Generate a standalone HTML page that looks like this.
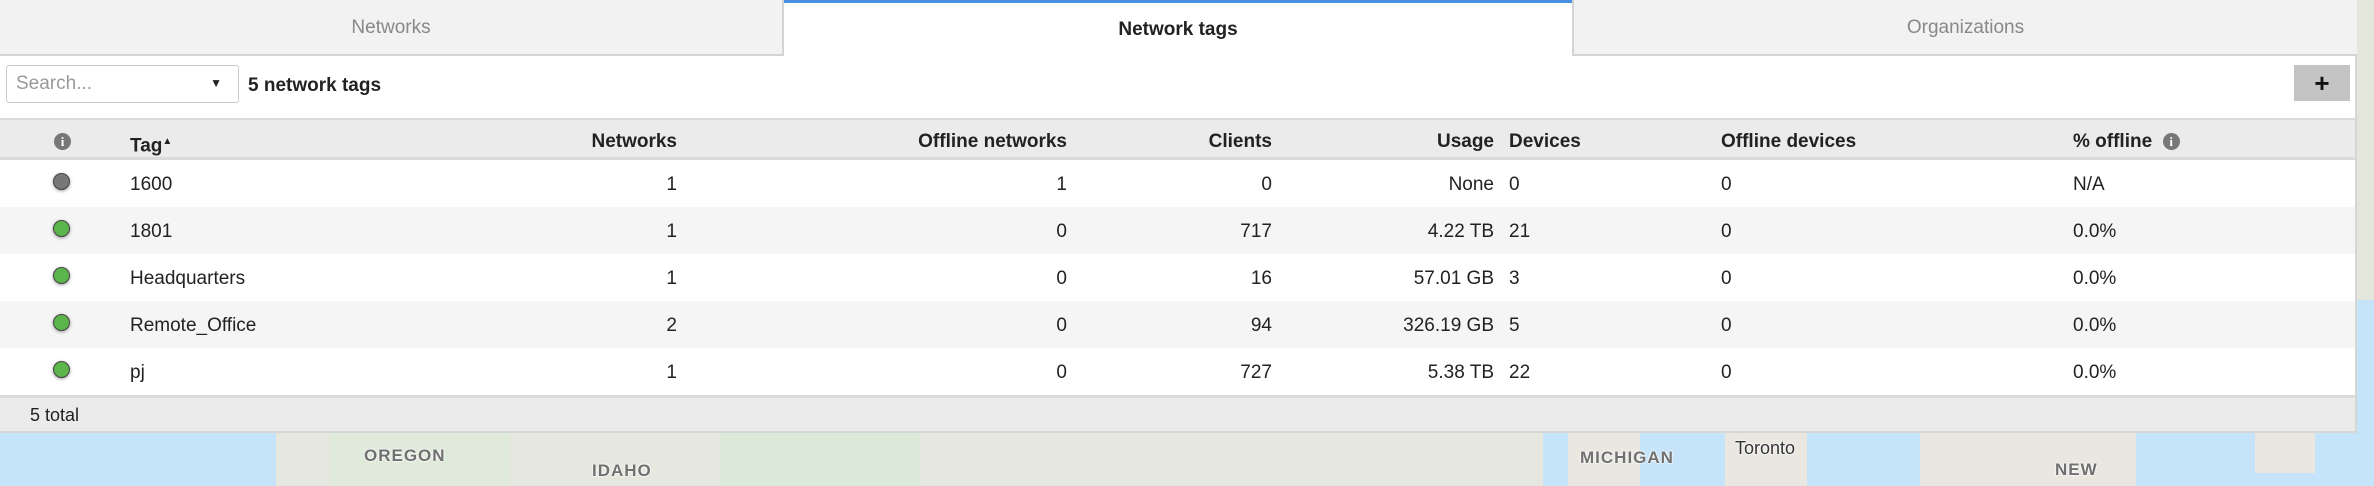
<!DOCTYPE html>
<html><head><meta charset="utf-8"><style>
*{box-sizing:border-box;margin:0;padding:0}
body{width:2374px;height:486px;overflow:hidden;position:relative;font-family:"Liberation Sans",sans-serif;background:#c6e4f9}
.abs{position:absolute}
.land{background:#e9e7e0}
.lbl{position:absolute;color:#707070;font-size:17px;font-weight:bold;letter-spacing:1px;text-shadow:0 0 2px #fff,0 0 2px #fff}
#panel{position:absolute;left:0;top:0;width:2357px;height:433px;background:#fff;border-bottom:2px solid #d6d6d6;border-right:2px solid #d6d6d6}
.tab{position:absolute;top:0;height:56px;background:#f2f2f2;border-bottom:2px solid #d4d4d4;color:#888;font-size:19px;text-align:center;line-height:56px}
.row{position:absolute;left:0;width:2355px;height:47px;font-size:19px;color:#222}
.c{position:absolute;top:0;line-height:49px}
.r{text-align:right}
.dot{position:absolute;left:53px;top:13px;width:17px;height:17px;border-radius:50%;border:1.5px solid #444;box-shadow:0 1px 3px rgba(0,0,0,.4)}
.hd{font-weight:bold;color:#222}
.hr .c{line-height:44px}
.info{display:inline-block;width:17px;height:17px;border-radius:50%;background:#777;color:#fff;font-size:13px;line-height:17px;text-align:center;font-weight:bold;font-family:"Liberation Serif",serif;vertical-align:1px}
</style></head><body>
<!-- map -->
<div class="abs land" style="left:276px;top:433px;width:1267px;height:53px;background:#e6e8df"></div>
<div class="abs" style="left:330px;top:433px;width:180px;height:53px;background:#dfeadb"></div>
<div class="abs" style="left:720px;top:433px;width:200px;height:53px;background:#dde9d8"></div>
<div class="abs land" style="left:1568px;top:433px;width:72px;height:53px"></div>
<div class="abs land" style="left:1725px;top:433px;width:82px;height:53px"></div>
<div class="abs land" style="left:1920px;top:433px;width:216px;height:53px"></div>
<div class="abs land" style="left:2255px;top:433px;width:60px;height:40px"></div>
<div class="abs" style="left:2357px;top:0;width:17px;height:300px;background:#e4e6dc"></div>
<div class="lbl" style="left:364px;top:446px">OREGON</div>
<div class="lbl" style="left:592px;top:461px">IDAHO</div>
<div class="lbl" style="left:1580px;top:448px">MICHIGAN</div>
<div class="lbl" style="left:1735px;top:438px;color:#333;font-weight:normal;font-size:18px;letter-spacing:0">Toronto</div>
<div class="lbl" style="left:2055px;top:460px">NEW</div>
<div id="panel">
 <div class="tab" style="left:0;width:784px;border-right:2px solid #d4d4d4">Networks</div>
 <div class="abs" style="left:784px;top:0;width:788px;height:56px;border-top:3px solid #4a90e2;text-align:center;line-height:54px;font-weight:bold;font-size:19px;color:#222">Network tags</div>
 <div class="tab" style="left:1572px;width:785px;border-left:2px solid #d4d4d4">Organizations</div>
 <div class="abs" style="left:6px;top:65px;width:233px;height:38px;border:1.5px solid #ccc;border-radius:3px;color:#999;font-size:19px;line-height:35px;padding-left:9px">Search...<span style="position:absolute;right:16px;top:0;color:#222;font-size:12px">▼</span></div>
 <div class="abs" style="left:248px;top:75px;font-size:19px;font-weight:bold;color:#222">5 network tags</div>
 <div class="abs" style="left:2294px;top:65px;width:56px;height:36px;background:#c4c4c4;text-align:center;line-height:36px;font-size:26px;font-weight:bold;color:#111">+</div>
 <div class="row hr" style="top:118px;height:42px;background:#ebebeb;border-top:2px solid #dadada;border-bottom:3px solid #dadada">
  <div class="c" style="left:54px"><span class="info">i</span></div>
  <div class="c hd" style="left:130px">Tag<sup style="font-size:10px">▲</sup></div>
  <div class="c hd r" style="right:1678px">Networks</div>
  <div class="c hd r" style="right:1288px">Offline networks</div>
  <div class="c hd r" style="right:1083px">Clients</div>
  <div class="c hd r" style="right:861px">Usage</div>
  <div class="c hd" style="left:1509px">Devices</div>
  <div class="c hd" style="left:1721px">Offline devices</div>
  <div class="c hd" style="left:2073px">% offline &nbsp;<span class="info">i</span></div>
 </div>
 <div class="row" style="top:160px;background:#fff"><div class="dot" style="background:#777"></div><div class="c" style="left:130px">1600</div><div class="c r" style="right:1678px">1</div><div class="c r" style="right:1288px">1</div><div class="c r" style="right:1083px">0</div><div class="c r" style="right:861px">None</div><div class="c" style="left:1509px">0</div><div class="c" style="left:1721px">0</div><div class="c" style="left:2073px">N/A</div></div>
 <div class="row" style="top:207px;background:#f5f5f5"><div class="dot" style="background:#5cb54a"></div><div class="c" style="left:130px">1801</div><div class="c r" style="right:1678px">1</div><div class="c r" style="right:1288px">0</div><div class="c r" style="right:1083px">717</div><div class="c r" style="right:861px">4.22 TB</div><div class="c" style="left:1509px">21</div><div class="c" style="left:1721px">0</div><div class="c" style="left:2073px">0.0%</div></div>
 <div class="row" style="top:254px;background:#fff"><div class="dot" style="background:#5cb54a"></div><div class="c" style="left:130px">Headquarters</div><div class="c r" style="right:1678px">1</div><div class="c r" style="right:1288px">0</div><div class="c r" style="right:1083px">16</div><div class="c r" style="right:861px">57.01 GB</div><div class="c" style="left:1509px">3</div><div class="c" style="left:1721px">0</div><div class="c" style="left:2073px">0.0%</div></div>
 <div class="row" style="top:301px;background:#f5f5f5"><div class="dot" style="background:#5cb54a"></div><div class="c" style="left:130px">Remote_Office</div><div class="c r" style="right:1678px">2</div><div class="c r" style="right:1288px">0</div><div class="c r" style="right:1083px">94</div><div class="c r" style="right:861px">326.19 GB</div><div class="c" style="left:1509px">5</div><div class="c" style="left:1721px">0</div><div class="c" style="left:2073px">0.0%</div></div>
 <div class="row" style="top:348px;background:#fff"><div class="dot" style="background:#5cb54a"></div><div class="c" style="left:130px">pj</div><div class="c r" style="right:1678px">1</div><div class="c r" style="right:1288px">0</div><div class="c r" style="right:1083px">727</div><div class="c r" style="right:861px">5.38 TB</div><div class="c" style="left:1509px">22</div><div class="c" style="left:1721px">0</div><div class="c" style="left:2073px">0.0%</div></div>
 <div class="row" style="top:395px;height:36px;background:#ebebeb;border-top:3px solid #dadada"><div class="c" style="left:30px;line-height:35px;font-size:18px">5 total</div></div>
</div>
</body></html>
